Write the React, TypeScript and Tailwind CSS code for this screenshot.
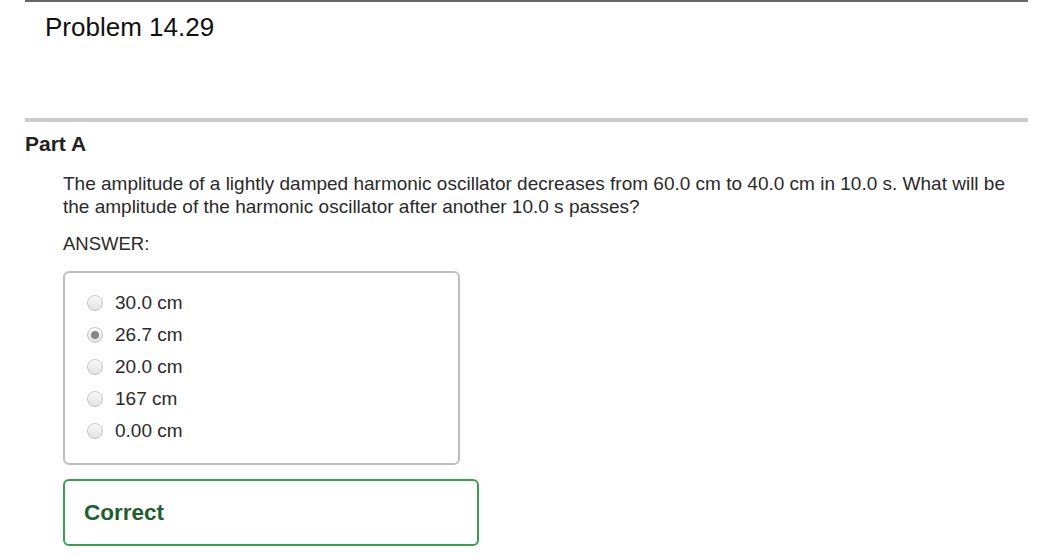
const options = [
  { label: "30.0 cm", checked: false },
  { label: "26.7 cm", checked: true },
  { label: "20.0 cm", checked: false },
  { label: "167 cm", checked: false },
  { label: "0.00 cm", checked: false },
];

const Radio = ({ checked }: { checked: boolean }) => (
  <span className="w-[16px] h-[16px] rounded-full border border-[#c4c4c4] bg-gradient-to-b from-[#fbfbfb] to-[#e2e2e2] flex items-center justify-center shrink-0">
    {checked && <span className="w-[8px] h-[8px] rounded-full bg-[#858585]" />}
  </span>
);

export default function App() {
  return (
    <div className="min-h-screen bg-white font-['Liberation_Sans',Arial,sans-serif] text-[#2a2a2a]">
      <div className="ml-[25px] w-[1003px]">
        <div className="h-[2px] bg-[#666]" />
        <h1 className="mt-[10px] pl-[20px] text-[26px] leading-[30px] text-[#111]">Problem 14.29</h1>
        <div className="mt-[76px] h-[4px] bg-[#ccc]" />

        <h2 className="mt-[10px] text-[21px] leading-[24px] font-bold text-[#222]">Part A</h2>

        <div className="pl-[38px]">
          <p className="mt-[16px] text-[19px] leading-[23px]">
            The amplitude of a lightly damped harmonic oscillator decreases from 60.0 cm to 40.0 cm in 10.0 s. What will be
            the amplitude of the harmonic oscillator after another 10.0 s passes?
          </p>
          <p className="mt-[14px] text-[18.5px] leading-[23px]">ANSWER:</p>

          <div className="mt-[16px] w-[397px] h-[194px] border-2 border-[#bdbdbd] rounded-[6px] pt-[14px] pl-[22px]">
            {options.map((o) => (
              <label key={o.label} className="h-[32px] flex items-center gap-[12px] text-[19px]">
                <Radio checked={o.checked} />
                <span>{o.label}</span>
              </label>
            ))}
          </div>

          <div className="mt-[14px] w-[416px] h-[67px] border-2 border-[#3a9e4c] rounded-[6px] pl-[19px] flex items-center">
            <span className="text-[22.5px] font-bold text-[#1e5e2f]">Correct</span>
          </div>
        </div>
      </div>
    </div>
  );
}
